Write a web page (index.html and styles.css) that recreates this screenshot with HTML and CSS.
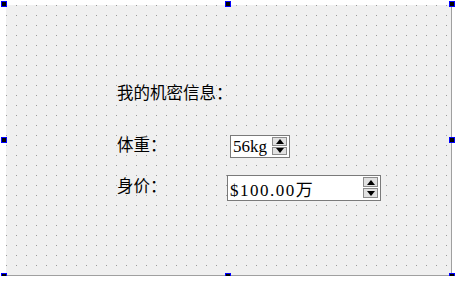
FILE: index.html
```html
<!DOCTYPE html>
<html lang="zh">
<head>
<meta charset="utf-8">
<title>Form</title>
<link rel="stylesheet" href="styles.css">
</head>
<body>
<div class="form">
  <div class="title">我的机密信息：</div>
  <div class="row row-weight">
    <div class="label">体重：</div>
    <div class="spin spin-weight">
      <span class="value">56kg</span>
      <div class="buttons">
        <div class="btn"><span class="tri up"></span></div>
        <div class="btn"><span class="tri down"></span></div>
      </div>
    </div>
  </div>
  <div class="row row-worth">
    <div class="label">身价：</div>
    <div class="spin spin-worth">
      <span class="value">$100.00万</span>
      <div class="buttons">
        <div class="btn"><span class="tri up"></span></div>
        <div class="btn"><span class="tri down"></span></div>
      </div>
    </div>
  </div>

  <span class="handle h-tl"></span>
  <span class="handle h-tm"></span>
  <span class="handle h-tr"></span>
  <span class="handle h-ml"></span>
  <span class="handle h-mr"></span>
  <span class="handle h-bl"></span>
  <span class="handle h-bm"></span>
  <span class="handle h-br"></span>
</div>
</body>
</html>
```

FILE: styles.css
```css
html, body {
  margin: 0;
  padding: 0;
  background: #ffffff;
}

body {
  font-family: "Liberation Serif", "Noto Sans CJK SC", serif;
  font-size: 16px;
  color: #000000;
}

.form {
  position: relative;
  box-sizing: border-box;
  margin: 5px 0 0 6px;
  width: 446px;
  height: 271px;
  padding: 79px 0 0 111px;
  border-right: 1px solid #a0a0a0;
  border-bottom: 1px solid #a0a0a0;
  background-color: #9a9a9a;
  background-image:
    linear-gradient(to right, transparent 1px, #f0f0f0 1px),
    linear-gradient(to bottom, transparent 1px, #f0f0f0 1px);
  background-size: 10px 10px, 10px 10px;
  background-position: 0 0, 0 0;
  background-origin: padding-box;
  background-clip: padding-box;
}

.title {
  height: 16px;
  line-height: 16px;
  font-family: "Noto Sans CJK SC", sans-serif;
  font-size: 16.5px;
  white-space: nowrap;
}

.row {
  display: flex;
  align-items: flex-start;
}

.row-weight {
  margin-top: 35px;
}

.row-worth {
  margin-top: 17px;
}

.label {
  width: 110px;
  height: 16px;
  line-height: 16px;
  font-family: "Noto Sans CJK SC", sans-serif;
  font-size: 16.5px;
  white-space: nowrap;
}

.row-weight .label {
  margin-top: 1px;
}

.row-worth .label {
  margin-top: 2px;
}

.spin {
  box-sizing: border-box;
  display: flex;
  align-items: stretch;
  border: 1px solid #7a7a7a;
  background: #ffffff;
}

.spin-weight {
  margin-left: 3px;
  width: 60px;
  height: 23px;
}

.spin-worth {
  width: 154px;
  height: 26px;
}

.value {
  flex: 1;
  padding-left: 2px;
  display: flex;
  align-items: center;
  white-space: nowrap;
  font-size: 17px;
}

.spin-worth .value {
  letter-spacing: 1.5px;
}

.buttons {
  display: flex;
  flex-direction: column;
  gap: 1px;
  width: 15px;
  margin: 1px 2px 2px 0;
}

.btn {
  flex: 1;
  box-sizing: border-box;
  border: 1px solid #8c8c8c;
  background: #e1e1e1;
  display: flex;
  align-items: center;
  justify-content: center;
}

.tri {
  width: 0;
  height: 0;
  border-left: 4px solid transparent;
  border-right: 4px solid transparent;
}

.tri.up {
  border-bottom: 5px solid #000000;
}

.tri.down {
  border-top: 5px solid #000000;
}

.handle {
  position: absolute;
  box-sizing: border-box;
  width: 6px;
  height: 6px;
  border: 1px solid #0000ff;
  background: #000000;
}

.h-tl { left: -5px; top: -4px; }
.h-tm { left: 219px; top: -4px; }
.h-tr { left: 443px; top: -4px; }
.h-ml { left: -5px; top: 132px; }
.h-mr { left: 443px; top: 132px; }
.h-bl { left: -5px; top: 268px; }
.h-bm { left: 219px; top: 268px; }
.h-br { left: 443px; top: 268px; }
```
